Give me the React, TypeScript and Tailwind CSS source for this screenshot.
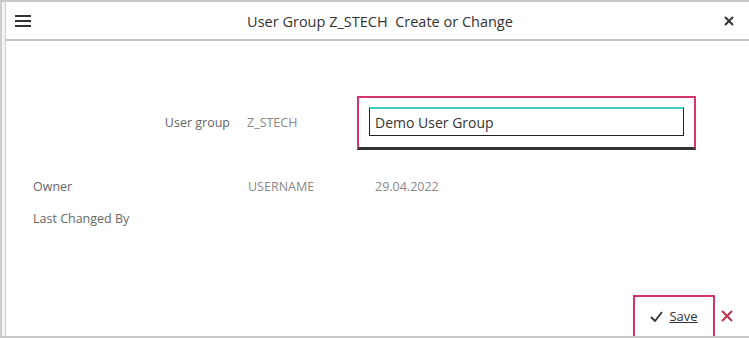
import React from "react";

export default function App() {
  return (
    <div
      className="w-[749px] h-[338px] bg-white relative overflow-hidden text-[#555]"
      style={{ fontFamily: '"Open Sans", "Liberation Sans", sans-serif' }}
    >
      <div className="h-full border-t-2 border-b-2 border-[#c8c8c8] flex">
        <div className="w-[6px] border-l-2 border-r border-[#cfcfcf] bg-[#f4f4f4]" />
        <div className="flex-1 flex flex-col">
          <div className="h-[39px] flex items-center border-b-2 border-[#c4c4c4] pl-[9px] pr-[14px]">
            <svg width="16" height="13" viewBox="0 0 16 13" className="text-[#333]">
              <rect x="0" y="1" width="16" height="2" fill="currentColor" />
              <rect x="0" y="6" width="16" height="2" fill="currentColor" />
              <rect x="0" y="11" width="16" height="2" fill="currentColor" />
            </svg>
            <div className="flex-1 text-center text-[14.5px] text-[#333] pl-[6px] pt-[2px]">
              User Group Z_STECH&nbsp; Create or Change
            </div>
            <svg width="12" height="12" viewBox="0 0 12 12">
              <path d="M2 2 L10 10 M10 2 L2 10" stroke="#333" strokeWidth="2" />
            </svg>
          </div>
          <div className="flex-1 flex flex-col">
            <div className="mt-[55px] flex items-center h-[54px]">
              <div className="w-[226px] text-right text-[12.5px] text-[#666] pr-[2px]">User group</div>
              <div className="w-[125px] pl-[15px] text-[12.5px] text-[#888]">Z_STECH</div>
              <div className="w-[339px] h-[54px] border-2 border-[#d6356a] border-b-[3px] border-b-[#333] p-[10px] pt-[9px]">
                <div className="h-[29px] border border-[#222] border-t-2 border-t-[#40d0c0] flex items-center px-[5px] text-[14px] text-[#333]">
                  Demo User Group
                </div>
              </div>
            </div>
            <div className="mt-[27px] flex text-[12.5px] h-[20px] items-center">
              <div className="w-[242px] pl-[27px] text-[#666]">Owner</div>
              <div className="w-[127px] text-[#888]">USERNAME</div>
              <div className="text-[#888]">29.04.2022</div>
            </div>
            <div className="mt-[13px] pl-[27px] text-[12.5px] text-[#666]">Last Changed By</div>
            <div className="flex-1" />
            <div className="flex items-end justify-end pr-[10px]">
              <div className="h-[41px] w-[82px] border-2 border-[#d6356a] border-b-0 flex items-center justify-center gap-[6px] text-[13px] text-[#333]">
                <svg width="13" height="11" viewBox="0 0 13 11">
                  <path d="M1 6 L5 10 L12 1" stroke="#333" strokeWidth="1.8" fill="none" />
                </svg>
                <span className="underline">Save</span>
              </div>
              <div className="h-[41px] w-[24px] flex items-center justify-center">
                <svg width="14" height="14" viewBox="0 0 14 14">
                  <path d="M2 2 L12 12 M12 2 L2 12" stroke="#c0304a" strokeWidth="2" />
                </svg>
              </div>
            </div>
          </div>
        </div>
      </div>
    </div>
  );
}
